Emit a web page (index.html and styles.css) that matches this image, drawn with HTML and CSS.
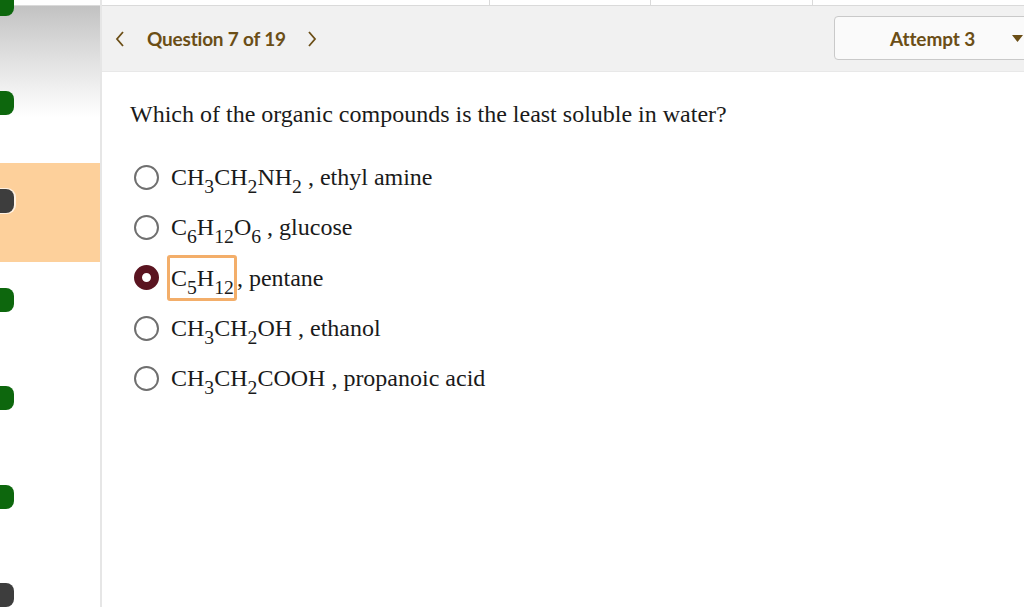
FILE: index.html
```html
<!DOCTYPE html>
<html>
<head>
<meta charset="utf-8">
<link rel="stylesheet" href="styles.css">
</head>
<body>
<div class="page">
  <aside class="sidebar">
    <div class="rows">
      <div class="row first"><span class="dot green"></span></div>
      <div class="row"><span class="dot green"></span></div>
      <div class="row current"><span class="dot dark"></span></div>
      <div class="row"><span class="dot green"></span></div>
      <div class="row"><span class="dot green"></span></div>
      <div class="row"><span class="dot green"></span></div>
      <div class="row"><span class="dot dark"></span></div>
    </div>
  </aside>
  <main class="main">
    <div class="tabs">
      <div class="tab t1"></div>
      <div class="tab t2"></div>
      <div class="tab t3"></div>
      <div class="tab t4"></div>
    </div>
    <header class="header">
      <div class="nav">
        <svg class="chev" width="12" height="18" viewBox="0 0 12 18"><path d="M9 2 L3 9 L9 16" fill="none" stroke="#6b4e16" stroke-width="1.8"/></svg>
        <span class="qnum">Question 7 of 19</span>
        <svg class="chev" width="12" height="18" viewBox="0 0 12 18"><path d="M3 2 L9 9 L3 16" fill="none" stroke="#6b4e16" stroke-width="1.8"/></svg>
      </div>
      <div class="attempt">
        <span class="attempt-label">Attempt 3</span>
        <svg class="caret" width="11" height="7" viewBox="0 0 11 7"><path d="M0 0 H11 L5.5 7 Z" fill="#6b4e16"/></svg>
      </div>
    </header>
    <section class="content">
      <p class="question">Which of the organic compounds is the least soluble in water?</p>
      <ul class="options">
        <li class="option"><span class="radio"></span><span class="label">CH<sub>3</sub>CH<sub>2</sub>NH<sub>2</sub> , ethyl amine</span></li>
        <li class="option"><span class="radio"></span><span class="label">C<sub>6</sub>H<sub>12</sub>O<sub>6</sub> , glucose</span></li>
        <li class="option selected"><span class="radio"></span><span class="label"><span class="focus">C<sub>5</sub>H<sub>12</sub></span>, pentane</span></li>
        <li class="option"><span class="radio"></span><span class="label">CH<sub>3</sub>CH<sub>2</sub>OH , ethanol</span></li>
        <li class="option"><span class="radio"></span><span class="label">CH<sub>3</sub>CH<sub>2</sub>COOH , propanoic acid</span></li>
      </ul>
    </section>
  </main>
</div>
</body>
</html>
```

FILE: styles.css
```css
html, body {
  margin: 0;
  padding: 0;
  width: 1024px;
  height: 607px;
  overflow: hidden;
  background: #ffffff;
}

.page {
  display: flex;
  height: 607px;
}

/* Sidebar */
.sidebar {
  position: relative;
  width: 100px;
  flex: none;
  border-right: 2px solid #e6e6e6;
  overflow: hidden;
  background: #ffffff;
}

.sidebar::before {
  content: "";
  position: absolute;
  left: 0;
  right: 0;
  top: 0;
  height: 5px;
  background: #ffffff;
  border-bottom: 1px solid #dadada;
  z-index: 1;
}

.sidebar::after {
  content: "";
  position: absolute;
  left: 0;
  right: 0;
  top: 6px;
  height: 112px;
  background: linear-gradient(to bottom, #c2c2c2 0%, #dcdcdc 40%, #f4f4f4 80%, rgba(255,255,255,0) 100%);
  z-index: 1;
}

.rows {
  display: flex;
  flex-direction: column;
  margin-top: -34px;
}

.row {
  height: 98.5px;
  flex: none;
  padding-top: 26px;
  box-sizing: border-box;
}

.row.current {
  background: #fdd09b;
}

.dot {
  position: relative;
  z-index: 2;
  display: block;
  width: 14px;
  height: 24px;
  border-radius: 0 8px 8px 0;
}

.dot.green {
  background: #0d670d;
}

.dot.dark {
  background: #3d3d3d;
  box-shadow: 1px 0 0 1px rgba(255,255,255,0.7);
}

/* Main */
.main {
  flex: 1;
  display: flex;
  flex-direction: column;
  min-width: 0;
}

.tabs {
  display: flex;
  height: 5px;
  border-bottom: 1px solid #dadada;
  flex: none;
}

.tab {
  height: 5px;
  border-right: 1px solid #dadada;
}

.t1 { width: 387px; }
.t2 { width: 160px; }
.t3 { width: 161px; }
.t4 { flex: 1; border-right: none; }

.header {
  height: 66px;
  flex: none;
  background: #f1f1f1;
  border-bottom: 1px solid #e8e8e8;
  display: flex;
  align-items: center;
  justify-content: space-between;
  box-sizing: border-box;
}

.nav {
  display: flex;
  align-items: center;
  padding-left: 12px;
  color: #6b4e16;
}

.qnum {
  font-family: "Source Sans Pro", Lato, "Open Sans", sans-serif;
  font-weight: 700;
  font-size: 19px;
  margin: 0 20px 0 21px;
  letter-spacing: -0.2px;
}

.chev {
  display: block;
}

.attempt {
  width: 200px;
  height: 44px;
  margin-right: -10px;
  margin-top: -1px;
  box-sizing: border-box;
  border: 1px solid #c9c9c9;
  border-radius: 4px;
  background: #fafafa;
  display: flex;
  align-items: center;
  padding-left: 55px;
  color: #6b4e16;
}

.attempt-label {
  font-family: "Source Sans Pro", Lato, "Open Sans", sans-serif;
  font-weight: 700;
  font-size: 19px;
  letter-spacing: -0.1px;
}

.caret {
  margin-left: 37px;
  display: block;
}

/* Content */
.content {
  padding-left: 28px;
  font-family: "Liberation Serif", "Times New Roman", serif;
  color: #1a1a1a;
}

.question {
  margin: 27px 0 0 0;
  font-size: 24px;
  line-height: 30px;
}

.options {
  list-style: none;
  margin: 23px 0 0 0;
  padding: 0;
}

.option {
  display: flex;
  align-items: center;
  height: 50.3px;
  font-size: 24px;
}

.radio {
  width: 25px;
  height: 25px;
  box-sizing: border-box;
  border: 2.5px solid #6f6f6f;
  border-radius: 50%;
  margin-left: 4px;
  margin-right: 12px;
  flex: none;
  background: #fff;
}

.option.selected .radio {
  border: 8.5px solid #5a1420;
  background: #ffffff;
}

.label {
  white-space: nowrap;
  line-height: 30px;
}

.label sub {
  font-size: 0.82em;
  vertical-align: -0.4em;
  line-height: 0;
}

.focus {
  display: inline-block;
  border: 3px solid #f3ae6a;
  border-radius: 3px;
  padding: 5px 0 5px 1px;
  margin-left: -4px;
  line-height: 30px;
}
```
